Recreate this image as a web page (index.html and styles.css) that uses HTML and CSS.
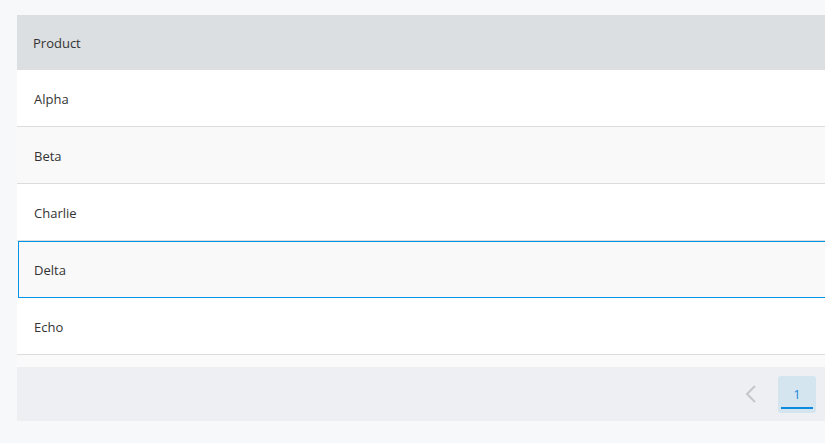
FILE: index.html
```html
<!DOCTYPE html>
<html>
<head>
<meta charset="utf-8">
<link rel="stylesheet" href="styles.css">
</head>
<body>
<div class="grid">
  <div class="header"><span class="cell">Product</span></div>
  <div class="body">
    <div class="row"><span class="cell">Alpha</span></div>
    <div class="row alt"><span class="cell">Beta</span></div>
    <div class="row"><span class="cell">Charlie</span></div>
    <div class="row alt focus"><span class="cell">Delta</span></div>
    <div class="row"><span class="cell">Echo</span></div>
  </div>
  <div class="pager">
    <button class="prev" aria-label="Previous">
      <svg width="12" height="18" viewBox="0 0 12 18"><path d="M10 1 L2 9 L10 17" fill="none" stroke="#c4c6c9" stroke-width="2"/></svg>
    </button>
    <button class="page current"><span class="num">1</span></button>
  </div>
</div>
</body>
</html>
```
FILE: styles.css
```css
html, body {
  margin: 0;
  padding: 0;
  background: #f7f8fa;
  overflow: hidden;
}
body {
  padding: 15px 0 0 17px;
  font-family: "Open Sans", "Noto Sans", sans-serif;
  font-size: 13px;
  color: #333;
}
.grid {
  width: 900px;
  background: #fafafa;
}
.header {
  height: 55px;
  background: #dcdfe2;
  display: flex;
  align-items: center;
}
.header .cell {
  padding-left: 16px;
}
.cell {
  padding-left: 17px;
  padding-top: 1px;
}
.row {
  height: 56px;
  background: #fff;
  border-bottom: 1px solid #dcdcdc;
  display: flex;
  align-items: center;
}
.row.alt {
  background: #f9f9f9;
}
.row.focus {
  box-shadow: inset 1px 1px 0 #0095e8;
  border-bottom-color: #0095e8;
  margin-left: 1px;
}
.row.focus .cell {
  padding-left: 16px;
}
.body {
  padding-bottom: 12px;
}
.pager {
  height: 54px;
  background: #eeeff2;
  display: flex;
  align-items: center;
  padding-left: 722px;
  gap: 15px;
}
.pager button {
  border: 0;
  background: transparent;
  padding: 0;
  font-family: inherit;
  cursor: pointer;
}
.prev {
  width: 24px;
  height: 36px;
  display: flex;
  align-items: center;
  justify-content: center;
}
.pager .page {
  width: 38px;
  height: 37px;
  border-radius: 3px;
  background: #d5e5f0;
  font-size: 13px;
  position: relative;
}
.pager .page .num {
  color: #1a88dc;
}
.page.current::after {
  content: "";
  position: absolute;
  left: 3px;
  right: 3px;
  bottom: 4px;
  height: 2px;
  background: #0a8be0;
}
```
